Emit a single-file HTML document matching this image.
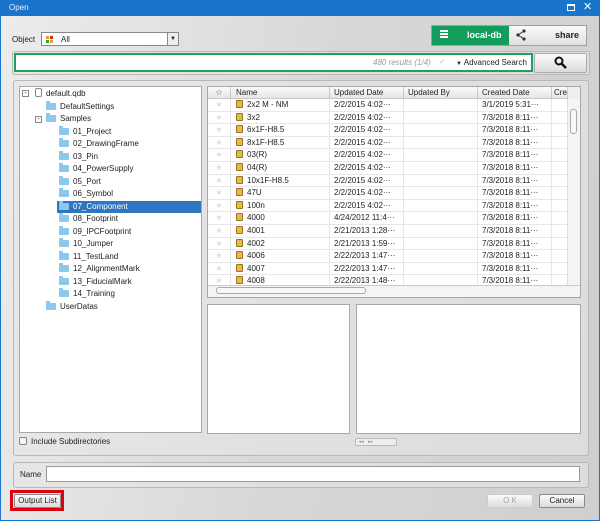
<!DOCTYPE html>
<html><head><meta charset="utf-8"><style>
*{box-sizing:border-box;margin:0;padding:0}
body{width:600px;height:521px;overflow:hidden;font-family:"Liberation Sans",sans-serif;font-size:8px;color:#222;position:relative;background:#1a74c9}
.a{position:absolute}
.win{left:1px;top:16px;width:598px;height:504px;background:linear-gradient(100deg,#ececec 0%,#d8d8d8 50%,#cfcfcf 100%)}
.box{border:1px solid #a8a8a8;background:#fff}
.grp{border:1px solid #b8b8b8;border-radius:3px;background:rgba(230,230,230,.6)}
.btn{border:1px solid #8a8a8a;border-radius:2px;background:linear-gradient(#fafafa,#dcdcdc);text-align:center;line-height:12px;font-size:8px}
.fold{display:inline-block;width:10px;height:7px;background:#8cc8ee;border-radius:1px;margin-right:4px;vertical-align:-1px;position:relative}
.fold:before{content:"";position:absolute;left:0;top:-2px;width:4px;height:2px;background:#8cc8ee}
.tr{height:12.5px;line-height:12.5px;white-space:nowrap}
.row{height:12.6px;line-height:12.6px;border-bottom:1px solid #e6e6ec;white-space:nowrap;display:flex}
.row div{overflow:hidden}
.c1{width:23px;text-align:center;color:#ddd;border-right:1px solid #e6e6ec}
.c2{width:99px;padding-left:5px;border-right:1px solid #e6e6ec}
.c3{width:74px;padding-left:4px;border-right:1px solid #e6e6ec}
.c4{width:74px;padding-left:4px;border-right:1px solid #e6e6ec}
.c5{width:74px;padding-left:4px;border-right:1px solid #e6e6ec}
.ic{display:inline-block;width:7px;height:8px;background:#e8b84c;border:1px solid #9a7420;border-radius:1px;margin-right:4px;vertical-align:-1px}
.hd{background:linear-gradient(#fafafa,#e6e6e6);border-bottom:1px solid #c8c8c8}
.hd div{border-right:1px solid #c8c8c8}
</style></head><body>
<div class="a" style="left:9px;top:3px;color:#e8f0fa;font-size:8px">Open</div>
<div class="a" style="left:567px;top:4px;width:8px;height:7px;border:1px solid #fff;border-top-width:2px"></div>
<div class="a" style="left:583px;top:0px;color:#fff;font-size:11px">✕</div>
<div class="a win"></div>

<div class="a" style="left:12px;top:35px">Object</div>
<div class="a box" style="left:41px;top:32px;width:138px;height:14px;border-color:#888">
 <div class="a" style="left:4px;top:3px;width:3px;height:3px;background:#e8a020"></div><div class="a" style="left:8px;top:3px;width:3px;height:3px;background:#c03030"></div>
 <div class="a" style="left:4px;top:7px;width:3px;height:3px;background:#30a040"></div><div class="a" style="left:8px;top:7px;width:3px;height:3px;background:#e8a020"></div>
 <div class="a" style="left:19px;top:2px">All</div>
 <div class="a" style="right:0;top:0;width:11px;height:12px;border-left:1px solid #888;background:#eee;font-size:6px;text-align:center;line-height:12px">▼</div>
</div>
<div class="a" style="left:431px;top:25px;width:156px;height:21px;border:1px solid #a0a0a0;background:linear-gradient(#fafafa,#e0e0e0)"></div>
<div class="a" style="left:432px;top:26px;width:77px;height:19px;background:#139c5c;color:#fff;font-weight:bold;font-size:9px">
 <div class="a" style="left:8px;top:4px;width:8px;height:2px;background:#fff;box-shadow:0 3px 0 #fff,0 6px 0 #fff"></div>
 <div class="a" style="left:35px;top:4px">local-db</div></div>
<svg class="a" style="left:515px;top:29px" width="12" height="12"><circle cx="9" cy="2" r="1.6" fill="#333"/><circle cx="3" cy="6" r="1.6" fill="#333"/><circle cx="9" cy="10" r="1.6" fill="#333"/><path d="M9 2L3 6L9 10" stroke="#333" fill="none"/></svg>
<div class="a" style="left:555px;top:30px;font-weight:bold;font-size:9px">share</div>

<div class="a grp" style="left:12px;top:51px;width:578px;height:24px"></div>
<div class="a" style="left:14px;top:53px;width:519px;height:19px;border:2px solid #20a060;background:#fff">
 <div class="a" style="left:357px;top:3px;color:#999;font-style:italic">480 results (1/4)</div>
 <div class="a" style="left:423px;top:2px;color:#bbb">✓</div>
 <div class="a" style="left:440px;top:3px"><span style="font-size:6px">▼</span> Advanced Search</div>
</div>
<div class="a btn" style="left:534px;top:53px;width:53px;height:20px;border-color:#aaa"></div>
<svg class="a" style="left:554px;top:56px" width="13" height="13"><circle cx="5" cy="5" r="3.5" stroke="#111" stroke-width="2" fill="none"/><path d="M8 8L12 12" stroke="#111" stroke-width="2.5"/></svg>

<div class="a grp" style="left:13px;top:80px;width:576px;height:376px"></div>
<div class="a box" style="left:19px;top:86px;width:183px;height:347px;padding-top:1px">
 <div class="tr" style="padding-left:0"><span class="a" style="left:2px;top:3px;width:7px;height:7px;border:1px solid #888;font-size:7px;line-height:5px;text-align:center">-</span><span style="margin-left:15px;display:inline-block;width:7px;height:9px;border:1px solid #888;border-radius:2px;vertical-align:-1px;margin-right:4px"></span>default.qdb</div>
 <div class="tr" style="padding-left:26px"><span class="fold"></span>DefaultSettings</div>
 <div class="tr" style="padding-left:26px"><span class="a" style="left:15px;top:29px;width:7px;height:7px;border:1px solid #888;font-size:7px;line-height:5px;text-align:center">-</span><span class="fold"></span>Samples</div>
 <div class="tr" style="padding-left:39px"><span class="fold"></span>01_Project</div>
 <div class="tr" style="padding-left:39px"><span class="fold"></span>02_DrawingFrame</div>
 <div class="tr" style="padding-left:39px"><span class="fold"></span>03_Pin</div>
 <div class="tr" style="padding-left:39px"><span class="fold"></span>04_PowerSupply</div>
 <div class="tr" style="padding-left:39px"><span class="fold"></span>05_Port</div>
 <div class="tr" style="padding-left:39px"><span class="fold"></span>06_Symbol</div>
 <div class="tr" style="margin-left:37px;padding-left:2px;background:#2f76c0;color:#fff"><span class="fold"></span>07_Component</div>
 <div class="tr" style="padding-left:39px"><span class="fold"></span>08_Footprint</div>
 <div class="tr" style="padding-left:39px"><span class="fold"></span>09_IPCFootprint</div>
 <div class="tr" style="padding-left:39px"><span class="fold"></span>10_Jumper</div>
 <div class="tr" style="padding-left:39px"><span class="fold"></span>11_TestLand</div>
 <div class="tr" style="padding-left:39px"><span class="fold"></span>12_AlignmentMark</div>
 <div class="tr" style="padding-left:39px"><span class="fold"></span>13_FiducialMark</div>
 <div class="tr" style="padding-left:39px"><span class="fold"></span>14_Training</div>
 <div class="tr" style="padding-left:26px"><span class="fold"></span>UserDatas</div>
</div>

<div class="a box" style="left:207px;top:86px;width:374px;height:212px;overflow:hidden">
 <div class="row hd" style="height:12px;line-height:12px"><div class="c1" style="color:#555">☆</div><div class="c2">Name</div><div class="c3">Updated Date</div><div class="c4">Updated By</div><div class="c5">Created Date</div><div style="width:16px;padding-left:2px">Cre</div></div>
 <div class="row"><div class="c1">★</div><div class="c2"><span class="ic"></span>2x2 M - NM</div><div class="c3">2/2/2015 4:02···</div><div class="c4"></div><div class="c5">3/1/2019 5:31···</div></div>
 <div class="row"><div class="c1">★</div><div class="c2"><span class="ic"></span>3x2</div><div class="c3">2/2/2015 4:02···</div><div class="c4"></div><div class="c5">7/3/2018 8:11···</div></div>
 <div class="row"><div class="c1">★</div><div class="c2"><span class="ic"></span>6x1F-H8.5</div><div class="c3">2/2/2015 4:02···</div><div class="c4"></div><div class="c5">7/3/2018 8:11···</div></div>
 <div class="row"><div class="c1">★</div><div class="c2"><span class="ic"></span>8x1F-H8.5</div><div class="c3">2/2/2015 4:02···</div><div class="c4"></div><div class="c5">7/3/2018 8:11···</div></div>
 <div class="row"><div class="c1">★</div><div class="c2"><span class="ic"></span>03(R)</div><div class="c3">2/2/2015 4:02···</div><div class="c4"></div><div class="c5">7/3/2018 8:11···</div></div>
 <div class="row"><div class="c1">★</div><div class="c2"><span class="ic"></span>04(R)</div><div class="c3">2/2/2015 4:02···</div><div class="c4"></div><div class="c5">7/3/2018 8:11···</div></div>
 <div class="row"><div class="c1">★</div><div class="c2"><span class="ic"></span>10x1F-H8.5</div><div class="c3">2/2/2015 4:02···</div><div class="c4"></div><div class="c5">7/3/2018 8:11···</div></div>
 <div class="row"><div class="c1">★</div><div class="c2"><span class="ic"></span>47U</div><div class="c3">2/2/2015 4:02···</div><div class="c4"></div><div class="c5">7/3/2018 8:11···</div></div>
 <div class="row"><div class="c1">★</div><div class="c2"><span class="ic"></span>100n</div><div class="c3">2/2/2015 4:02···</div><div class="c4"></div><div class="c5">7/3/2018 8:11···</div></div>
 <div class="row"><div class="c1">★</div><div class="c2"><span class="ic"></span>4000</div><div class="c3">4/24/2012 11:4···</div><div class="c4"></div><div class="c5">7/3/2018 8:11···</div></div>
 <div class="row"><div class="c1">★</div><div class="c2"><span class="ic"></span>4001</div><div class="c3">2/21/2013 1:28···</div><div class="c4"></div><div class="c5">7/3/2018 8:11···</div></div>
 <div class="row"><div class="c1">★</div><div class="c2"><span class="ic"></span>4002</div><div class="c3">2/21/2013 1:59···</div><div class="c4"></div><div class="c5">7/3/2018 8:11···</div></div>
 <div class="row"><div class="c1">★</div><div class="c2"><span class="ic"></span>4006</div><div class="c3">2/22/2013 1:47···</div><div class="c4"></div><div class="c5">7/3/2018 8:11···</div></div>
 <div class="row"><div class="c1">★</div><div class="c2"><span class="ic"></span>4007</div><div class="c3">2/22/2013 1:47···</div><div class="c4"></div><div class="c5">7/3/2018 8:11···</div></div>
 <div class="row"><div class="c1">★</div><div class="c2"><span class="ic"></span>4008</div><div class="c3">2/22/2013 1:48···</div><div class="c4"></div><div class="c5">7/3/2018 8:11···</div></div>
 <div class="a" style="left:359px;top:0;width:13px;height:12px;background:#eee;border-left:1px solid #ccc"></div>
 <div class="a" style="left:359px;top:12px;width:13px;height:187px;background:#f4f4f4;border-left:1px solid #ddd"></div>
 <div class="a" style="left:362px;top:22px;width:7px;height:25px;border:1px solid #aaa;border-radius:3px;background:#f8f8f8"></div>
 <div class="a" style="left:0;top:198px;width:372px;height:12px;background:#f4f4f4;border-top:1px solid #ccc"></div>
 <div class="a" style="left:8px;top:200px;width:150px;height:7px;border:1px solid #aaa;border-radius:3px;background:#f8f8f8"></div>
</div>

<div class="a box" style="left:207px;top:304px;width:143px;height:130px"></div>
<div class="a box" style="left:356px;top:304px;width:225px;height:130px"></div>
<div class="a" style="left:19px;top:437px;width:8px;height:8px;border:1px solid #888;border-radius:2px;background:#f4f4f4"></div>
<div class="a" style="left:31px;top:437px">Include Subdirectories</div>
<div class="a" style="left:355px;top:438px;width:42px;height:8px;border:1px solid #bbb;border-radius:2px;background:#eee;font-size:5px;color:#999;line-height:6px">&nbsp;&nbsp;◂◂ &nbsp;&nbsp;▸▸</div>

<div class="a grp" style="left:13px;top:462px;width:576px;height:26px"></div>
<div class="a" style="left:20px;top:470px">Name</div>
<div class="a box" style="left:46px;top:466px;width:534px;height:16px;border-color:#999"></div>

<div class="a" style="left:10px;top:490px;width:54px;height:21px;border:3px solid #e00010"></div>
<div class="a btn" style="left:14px;top:494px;width:47px;height:14px">Output List</div>
<div class="a btn" style="left:487px;top:494px;width:46px;height:14px;color:#aaa;border-color:#ccc">O K</div>
<div class="a btn" style="left:539px;top:494px;width:46px;height:14px">Cancel</div>
</body></html>
